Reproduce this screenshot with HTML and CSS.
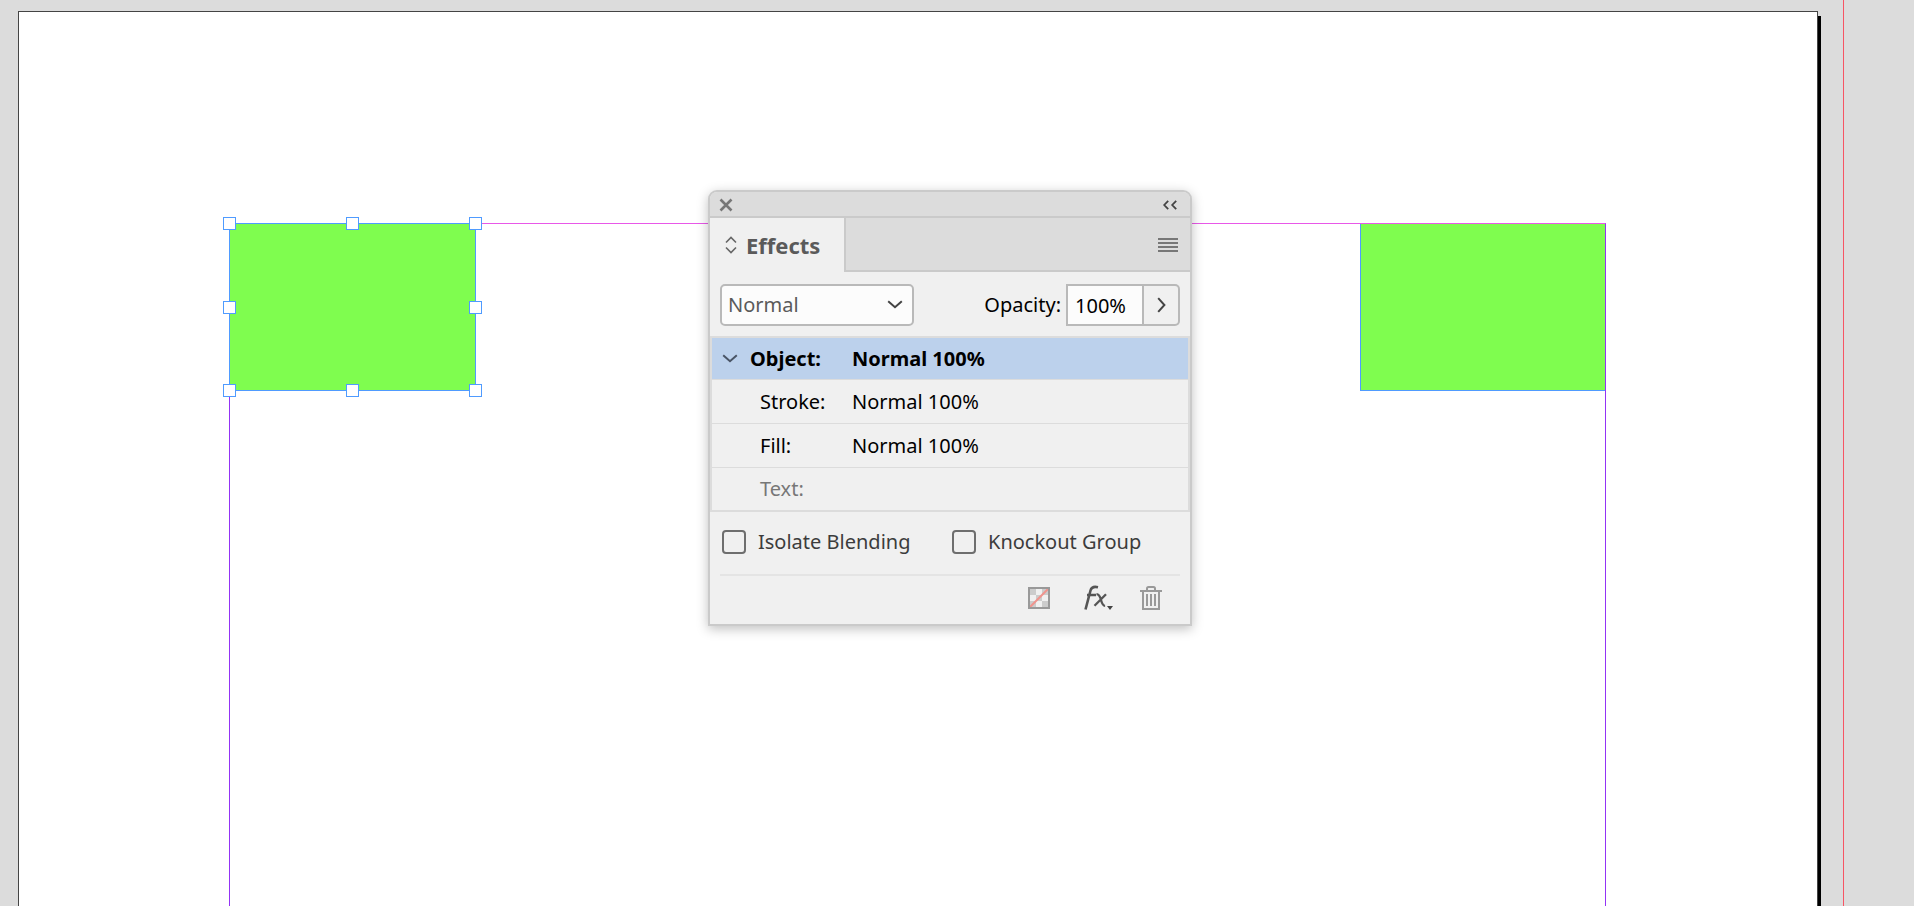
FILE: index.html
```
<!DOCTYPE html>
<html lang="en">
<head>
  <meta charset="UTF-8">
  <title>Effects</title>
  <link rel="stylesheet" href="styles.css">
</head>
<body>
  <main class="pasteboard">
    <div class="sheet">
      <div class="margins">
        <div class="frame frame-left">
          <span class="handle top left"></span>
          <span class="handle top center"></span>
          <span class="handle top right"></span>
          <span class="handle middle left"></span>
          <span class="handle middle right"></span>
          <span class="handle bottom left"></span>
          <span class="handle bottom center"></span>
          <span class="handle bottom right"></span>
        </div>
        <div class="frame frame-right"></div>
      </div>
    </div>
    <div class="bleed"></div>

    <section class="panel">
      <header class="titlebar">
        <button class="icon-btn" aria-label="Close">
          <svg width="14" height="14" viewBox="0 0 14 14"><path d="M1.5 1.5l11 11M12.5 1.5l-11 11" stroke="#777" stroke-width="2.6"/></svg>
        </button>
        <button class="icon-btn" aria-label="Collapse">
          <svg width="14" height="10" viewBox="0 0 14 10"><path d="M5.2.8L1.2 5l4 4.200M13.200.8L9.200 5l4 4.200" fill="none" stroke="#444" stroke-width="1.8"/></svg>
        </button>
      </header>

      <div class="tabs">
        <button class="tab">
          <svg width="12" height="18" viewBox="0 0 12 18"><path d="M1 6.500L6 1.500l5 5M1 11.500l5 5 5-5" fill="none" stroke="#666" stroke-width="1.6"/></svg>
          Effects
        </button>
        <button class="icon-btn menu" aria-label="Panel menu">
          <svg width="20" height="14" viewBox="0 0 20 14"><path d="M0 1h20M0 5h20M0 9h20M0 13h20" stroke="#777" stroke-width="2"/></svg>
        </button>
      </div>

      <div class="options">
        <div class="select">
          <select aria-label="Blending mode">
            <option>Normal</option>
          </select>
          <svg class="arrow" width="16" height="9" viewBox="0 0 16 9"><path d="M1.200 1.200L8 7.200l6.800-6" fill="none" stroke="#444" stroke-width="2"/></svg>
        </div>
        <label for="opacity">Opacity:</label>
        <input class="opacity" id="opacity" type="text" value="100%">
        <button class="stepper" aria-label="Opacity slider">
          <svg width="9" height="16" viewBox="0 0 9 16"><path d="M1.200 1.200L7.400 8l-6.200 6.800" fill="none" stroke="#444" stroke-width="2"/></svg>
        </button>
      </div>

      <table class="targets">
        <colgroup><col class="names"><col></colgroup>
        <tr class="selected">
          <th>
            <div class="group">
              <svg width="16" height="9" viewBox="0 0 16 9"><path d="M1.200 1.200L8 7.200l6.800-6" fill="none" stroke="#4a5566" stroke-width="2"/></svg>
              Object:
            </div>
          </th>
          <td>Normal 100%</td>
        </tr>
        <tr><th>Stroke:</th><td>Normal 100%</td></tr>
        <tr><th>Fill:</th><td>Normal 100%</td></tr>
        <tr class="disabled"><th>Text:</th><td></td></tr>
      </table>

      <div class="checks">
        <label><input type="checkbox"> Isolate Blending</label>
        <label><input type="checkbox"> Knockout Group</label>
      </div>

      <footer class="actions">
        <button class="icon-btn" aria-label="Clear all effects">
          <svg width="22" height="22" viewBox="0 0 22 22">
            <path d="M2 2h18v18H2z" fill="#f0f0f0"/>
            <path d="M2 2h6v6H2zM14 2h6v6h-6zM8 8h6v6H8zM2 14h6v6H2zM14 14h6v6h-6z" fill="#ccc"/>
            <path d="M2 20L20 2" stroke="#f0948e" stroke-width="2"/>
            <path d="M1 1h20v20H1z" fill="none" stroke="#999" stroke-width="2"/>
          </svg>
        </button>
        <button class="icon-btn" aria-label="Add an effect">
          <svg width="30" height="26" viewBox="0 0 30 26">
            <path d="M1.500 24.500L6.500 5.500C7.400 2.200 9.600 1.200 14 2.200M3 10h9" fill="none" stroke="#555" stroke-width="2.600"/>
            <path d="M12.500 9.200c3 0 3.800 3 4.600 6s2 5.600 4 5.600M22 9.200L10.500 20.800" fill="none" stroke="#555" stroke-width="2.300"/>
            <path d="M23 21h6l-3 4z" fill="#444"/>
          </svg>
        </button>
        <button class="icon-btn" aria-label="Delete">
          <svg width="22" height="24" viewBox="0 0 22 24">
            <path d="M0 5h22M3 5v18h16V5M7 4V2.500Q7 1 8.500 1h5Q15 1 15 2.500V4M7 8v12M11 8v12M15 8v12" fill="none" stroke="#999" stroke-width="2"/>
          </svg>
        </button>
      </footer>
    </section>
  </main>
</body>
</html>
```
FILE: styles.css
```
* { box-sizing: border-box; }
body { margin: 0; font-family: "Noto Sans", "Open Sans", sans-serif; font-size: 20px; line-height: 28px; color: #000; }
button, input, select { font: inherit; color: inherit; margin: 0; }
svg { display: block; flex: none; }

.pasteboard { position: relative; display: flex; height: 100vh; padding: 11px 70px 0 18px; overflow: hidden; background: #dcdcdc; }
.sheet { flex: 1; display: flex; padding: 211px 211px 0 210px; background: #fff; border: 1px solid #444; border-bottom: 0; box-shadow: 3px 5px 0 #000; }
.margins { flex: 1; display: flex; justify-content: space-between; align-items: flex-start; border: 1px solid #9333f5; border-top-color: #e858e8; border-bottom: 0; }
.bleed { width: 1px; margin: -11px 0 0 25px; background: #f75464; }

.frame { width: 247px; height: 168px; background: #7ffd4f; }
.frame-left { position: relative; margin: -1px 0 0 -1px; border: 1px solid #4f9bff; }
.frame-right { width: 245px; height: 167px; border: 1px solid #4f9bff; border-top: 0; border-right: 0; }

.handle { position: absolute; width: 13px; height: 13px; background: #fff; border: 1px solid #4f9bff; }
.handle.top { top: -7px; }
.handle.middle { top: calc(50% - 6px); }
.handle.bottom { bottom: -7px; }
.handle.left { left: -7px; }
.handle.center { left: calc(50% - 7px); }
.handle.right { right: -7px; }

/* floating panel */
.panel { position: absolute; left: 708px; top: 190px; width: 484px; background: #f0f0f0; border: 2px solid #cacaca; border-radius: 9px 9px 0 0; box-shadow: 0 3px 12px rgba(0, 0, 0, .25); }
.icon-btn { display: flex; padding: 0; border: 0; background: none; }

.titlebar { display: flex; justify-content: space-between; align-items: center; height: 26px; padding: 2px 13px 0 9px; background: #dcdcdc; border-bottom: 2px solid #cacaca; border-radius: 7px 7px 0 0; }
.tabs { display: flex; height: 54px; }
.tab { display: flex; align-items: center; gap: 9px; width: 136px; padding: 0 0 0 15px; border: 0; border-right: 2px solid #cacaca; background: #f0f0f0; color: #5a5a5a; font-size: 22px; font-weight: bold; }
.menu { flex: 1; justify-content: flex-end; align-items: center; padding: 2px 12px 0 0; background: #dcdcdc; border-bottom: 2px solid #cacaca; }

.options { display: flex; align-items: center; height: 64px; padding: 2px 10px 0; }
.select { position: relative; margin-right: auto; }
.select select { display: block; appearance: none; width: 194px; height: 42px; padding: 0 6px; border: 2px solid #b9b9b9; border-radius: 5px; background: #fcfcfc; color: #5a5a5a; }
.arrow { position: absolute; right: 11px; top: 16px; pointer-events: none; }
.opacity { width: 78px; height: 42px; margin-left: 5px; padding: 0 7px; border: 2px solid #b9b9b9; background: #fcfcfc; }
.stepper { display: flex; align-items: center; justify-content: center; width: 36px; height: 42px; padding: 0; border: 2px solid #b9b9b9; border-left: 0; border-radius: 0 5px 5px 0; background: #f0f0f0; }

.targets { width: 100%; border: 2px solid #dcdcdc; border-collapse: separate; border-spacing: 0; table-layout: fixed; }
.targets .names { width: 140px; }
.targets th, .targets td { height: 44px; padding: 0; text-align: left; font-weight: normal; border-bottom: 1px solid #dcdcdc; }
.targets th { padding-left: 48px; }
.targets .selected th, .targets .selected td { height: 42px; font-weight: bold; background: #bcd1ec; }
.targets .selected th { padding-left: 10px; }
.group { display: flex; align-items: center; gap: 12px; }
.targets .disabled th, .targets .disabled td { height: 42px; color: #777; border-bottom: 0; }

.checks { display: flex; padding: 0 12px 2px; height: 62px; align-items: center; color: #3c3c3c; }
.checks label { display: flex; flex: none; align-items: center; gap: 12px; width: 230px; }
.checks label:last-child { width: auto; }
.checks input { appearance: none; flex: none; width: 24px; height: 24px; border: 2px solid #6e6e6e; border-radius: 4px; }

.actions { display: flex; justify-content: flex-end; align-items: center; gap: 26px; height: 50px; margin: 0 10px; padding: 0 18px 4px 0; border-top: 2px solid #e4e4e4; }
.actions .icon-btn:first-child { margin-right: 8px; }
```
